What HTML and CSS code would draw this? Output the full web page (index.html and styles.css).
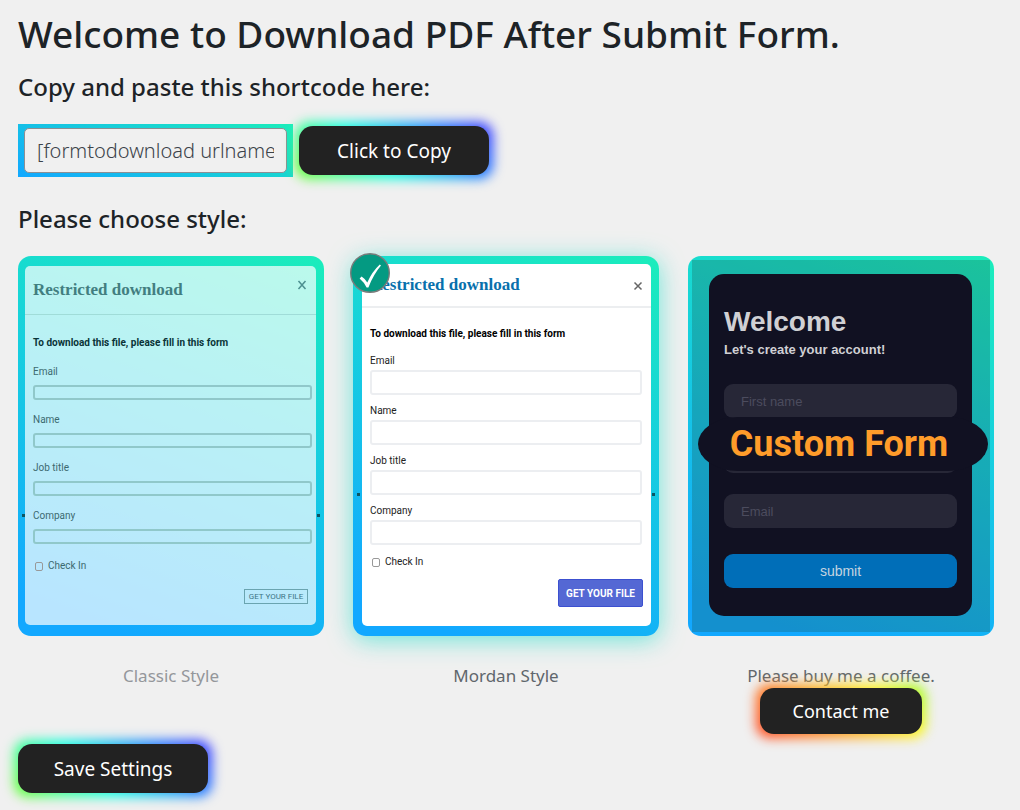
FILE: index.html
```html
<!DOCTYPE html>
<html lang="en">
<head>
  <meta charset="UTF-8">
  <meta name="viewport" content="width=device-width, initial-scale=1.0">
  <title>Download PDF After Submit Form</title>
  <link rel="stylesheet" href="styles.css">
</head>
<body>
  <main class="settings">
    <h1>Welcome to Download PDF After Submit Form.</h1>
    <h2><label for="shortcode">Copy and paste this shortcode here:</label></h2>
    <div class="copy-row">
      <div class="shortcode-box">
        <input type="text" id="shortcode" class="shortcode" readonly value="[formtodownload urlname=&quot;&quot;]">
      </div>
      <button type="button" class="glow-btn" onclick="copyShortcode()">Click to Copy</button>
    </div>

    <h2>Please choose style:</h2>
    <div class="styles">
      <div class="option">
        <input type="radio" name="style" id="style-classic" class="pick">
        <div class="frame classic">
          <div class="form">
            <div class="form-head">
              <h3>Restricted download</h3>
              <button type="button" class="close" aria-label="Close">
                <svg viewBox="0 0 10 10"><path d="M1.5 1 8.5 9M8.5 1 1.5 9"/></svg>
              </button>
            </div>
            <div class="form-body">
              <p>To download this file, please fill in this form</p>
              <label for="c-email">Email</label>
              <input type="text" id="c-email" class="field">
              <label for="c-name">Name</label>
              <input type="text" id="c-name" class="field">
              <label for="c-job">Job title</label>
              <input type="text" id="c-job" class="field">
              <label for="c-company">Company</label>
              <input type="text" id="c-company" class="field">
              <div class="check"><input type="checkbox" id="c-check"><label for="c-check">Check In</label></div>
              <button type="button" class="get-file">GET YOUR FILE</button>
            </div>
          </div>
        </div>
        <label for="style-classic" class="caption faded">Classic Style</label>
      </div>

      <div class="option">
        <input type="radio" name="style" id="style-mordan" class="pick" checked>
        <svg class="badge" viewBox="0 0 40 40"><circle cx="20" cy="20" r="19.3"/><path d="M9.6 25.4 11.6 23.4Q14.8 25.4 17.3 29.4 22 18.6 29.8 11.4L31 12.6Q23.6 21.4 18.4 34.4H16.6Q14 29 9.6 25.4z"/></svg>
        <div class="frame mordan">
          <div class="form">
            <div class="form-head">
              <h3>Restricted download</h3>
              <button type="button" class="close" aria-label="Close">
                <svg viewBox="0 0 10 10"><path d="M1.5 1.5 8.5 8.5M8.5 1.5 1.5 8.5"/></svg>
              </button>
            </div>
            <div class="form-body">
              <p>To download this file, please fill in this form</p>
              <label for="m-email">Email</label>
              <input type="text" id="m-email" class="field">
              <label for="m-name">Name</label>
              <input type="text" id="m-name" class="field">
              <label for="m-job">Job title</label>
              <input type="text" id="m-job" class="field">
              <label for="m-company">Company</label>
              <input type="text" id="m-company" class="field">
              <div class="check"><input type="checkbox" id="m-check"><label for="m-check">Check In</label></div>
              <button type="button" class="get-file">GET YOUR FILE</button>
            </div>
          </div>
        </div>
        <label for="style-mordan" class="caption">Mordan Style</label>
      </div>

      <div class="option">
        <div class="frame custom">
          <div class="account">
            <h3>Welcome</h3>
            <p>Let's create your account!</p>
            <input type="text" placeholder="First name" aria-label="First name">
            <input type="text" aria-label="Last name">
            <input type="text" placeholder="Email" aria-label="Email">
            <button type="button">submit</button>
          </div>
          <div class="ribbon">Custom Form</div>
        </div>
        <span class="caption">Please buy me a coffee.</span>
        <button type="button" class="glow-btn warm">Contact me</button>
      </div>
    </div>

    <button type="submit" class="glow-btn">Save Settings</button>
  </main>

  <script>
    function copyShortcode() {
      const input = document.getElementById('shortcode');
      input.select();
      navigator.clipboard.writeText(input.value);
    }
  </script>
</body>
</html>
```
FILE: styles.css
```css
* {
  box-sizing: border-box;
}
body {
  margin: 0;
  background-color: #f0f0f0;
  color: #1d2327;
  font-family: "Noto Sans", "Open Sans", sans-serif;
}
h1, h2, h3, p {
  margin: 0;
}
button, input {
  font-family: inherit;
}
.settings {
  padding: 11px 26px 18px 18px;
}
h1 {
  font-size: 37px;
  font-weight: 500;
  line-height: 46px;
  margin-bottom: 15px;
}
h2 {
  font-size: 24px;
  font-weight: 500;
  line-height: 30px;
  margin-bottom: 22px;
}

/* shortcode */
.copy-row {
  display: flex;
  align-items: center;
  gap: 6px;
  margin-bottom: 27px;
}
.shortcode-box {
  padding: 4px 6px;
  background: linear-gradient(20deg, #12a8ff, #1bedbb);
}
.shortcode {
  display: block;
  width: 263px;
  height: 45px;
  padding: 0 12px;
  border: 1px solid #8c8f94;
  border-radius: 5px;
  background-color: #f0f0f0;
  color: #3c434a;
  font-size: 20px;
  font-weight: 300;
}

/* buttons with a coloured glow behind */
.glow-btn {
  position: relative;
  z-index: 0;
  width: 190px;
  height: 49px;
  border: none;
  background: none;
  color: #fff;
  font-size: 19px;
  cursor: pointer;
}
.glow-btn::before,
.glow-btn::after {
  content: "";
  position: absolute;
  z-index: -1;
  border-radius: 14px;
}
.glow-btn::before {
  inset: -4px;
  background: linear-gradient(45deg, #70ff20, #40ff90 20%, #10ffe0 40%, #2080ff 75%, #4030ff);
  filter: blur(6px);
}
.glow-btn::after {
  inset: 0;
  background-color: #222;
}
.glow-btn.warm {
  width: 162px;
  height: 46px;
  font-size: 18px;
}
.glow-btn.warm::before {
  background: linear-gradient(45deg, #ff4020, #ff9020 35%, #fff420 75%, #90ff20);
}

/* style choices */
.styles {
  display: grid;
  grid-template-columns: repeat(3, 1fr);
  gap: 29px;
  margin-bottom: 10px;
}
.option {
  position: relative;
  display: flex;
  flex-direction: column;
  align-items: center;
}
.pick {
  position: absolute;
  top: 0;
  left: 0;
  margin: 0;
  opacity: 0;
}
.badge {
  position: absolute;
  z-index: 2;
  top: -3px;
  left: -3px;
  width: 40px;
  height: 40px;
  fill: #fff;
}
.badge circle {
  fill: #049a82;
  stroke: #7b7b7b;
  stroke-width: 1.4;
}
.caption {
  margin-top: 28px;
  color: #60666c;
  font-size: 17px;
  line-height: 24px;
}
.caption.faded {
  color: #94979b;
}
.frame {
  position: relative;
  display: grid;
  width: 100%;
  height: 380px;
  border-radius: 13px;
  background: linear-gradient(20deg, #12a8ff 8%, #16cfde 60%, #1bedbb);
}
.form {
  border-radius: 5px;
  background-color: #fff;
  color: #222;
}
.form-head {
  display: flex;
  justify-content: space-between;
}
.form-head h3 {
  font-family: "Liberation Serif", serif;
  font-size: 17px;
}
.close {
  width: 10px;
  height: 10px;
  padding: 0;
  border: none;
  background: none;
}
.close svg {
  display: block;
  fill: none;
  stroke: #666;
  stroke-width: 1.5;
}
.form-body {
  display: flex;
  flex-direction: column;
  padding: 0 8px;
  font-family: Roboto, sans-serif;
  font-size: 10px;
}
.form-body p {
  color: #000;
  font-weight: bold;
  line-height: 16px;
}
.form-body label {
  line-height: 16px;
}
.check {
  display: flex;
  align-items: center;
  gap: 5px;
  padding-left: 2px;
}
.check input {
  appearance: none;
  width: 8px;
  height: 9px;
  margin: 0;
  border: 1px solid #999;
  border-radius: 2px;
}
.get-file {
  align-self: flex-end;
  padding: 0;
  white-space: nowrap;
}

/* tick marks on the frame edge */
.classic::before, .classic::after,
.mordan::before, .mordan::after {
  content: "";
  position: absolute;
  top: 237px;
  width: 3px;
  height: 3px;
  background-color: #0c5563;
}
.classic::before, .mordan::before {
  left: 4px;
}
.classic::after, .mordan::after {
  right: 4px;
}

.classic {
  padding: 10px 8px 11px 7px;
}
.classic::before, .classic::after {
  top: 258px;
}
.classic .form {
  background-color: rgba(255, 255, 255, 0.7);
  color: #3c6a70;
}
.classic .form-head {
  height: 49px;
  padding: 14px 9px 0 8px;
  border-bottom: 1px solid #a0dcd8;
}
.classic h3 {
  color: #427e80;
}
.classic .form-body p {
  margin: 20px 0 13px;
  color: #0a3438;
}
.classic .field {
  height: 15px;
  margin: 5px -4px 12px 0;
  border: 2px solid #90c8ca;
  border-radius: 3px;
  background: none;
}
.classic .check {
  margin-top: 2px;
}
.classic .get-file {
  width: 64px;
  height: 15px;
  margin-top: 15px;
  border: 1px solid #6aa4b0;
  background: none;
  color: #3c7484;
  font-size: 8px;
}
.classic .close svg {
  stroke: #4c9090;
}

.mordan {
  padding: 8px 8px 10px 9px;
  box-shadow: 0 4px 24px rgba(27, 222, 200, 0.6);
}
.mordan .form-head {
  height: 44px;
  padding: 11px 8px 0;
  border-bottom: 2px solid #eceef0;
}
.mordan .close {
  margin-top: 6px;
}
.mordan h3 {
  color: #0870ac;
}
.mordan .form-body p {
  margin: 18px 0 11px;
}
.mordan .field {
  height: 25px;
  margin: 1px 1px 8px 0;
  border: 2px solid #eceef1;
  border-radius: 3px;
}
.mordan .check {
  margin-top: 1px;
}
.mordan .get-file {
  width: 85px;
  height: 28px;
  margin-top: 9px;
  border: 1px solid #3c50d0;
  border-radius: 2px;
  background-color: #5468d4;
  color: #fff;
  font-size: 10px;
  font-weight: bold;
}

.custom {
  padding: 18px 22px 20px 21px;
}
.custom::before {
  content: "";
  position: absolute;
  inset: 4px;
  background-color: rgba(28, 70, 60, 0.25);
}
.account {
  position: relative;
  display: flex;
  flex-direction: column;
  padding: 32px 15px 0;
  border-radius: 15px;
  background-color: #111122;
  color: #d0d0d4;
  font-family: "Liberation Sans", sans-serif;
}
.account h3 {
  font-size: 28px;
  line-height: 32px;
}
.account p {
  margin: 4px 0 26px;
  font-size: 13px;
  font-weight: bold;
  line-height: 16px;
}
.account input {
  height: 34px;
  margin-bottom: 21px;
  padding: 0 17px;
  border: none;
  border-radius: 9px;
  background-color: #272737;
  font-size: 13px;
}
.account input::placeholder {
  color: #4c4c5e;
}
.account button {
  height: 34px;
  margin-top: 5px;
  border: none;
  border-radius: 9px;
  background-color: #006eb8;
  color: #c4d4e0;
  font-size: 14px;
}
.ribbon {
  position: absolute;
  top: 161px;
  left: 10px;
  right: 6px;
  padding-right: 8px;
  border-radius: 40px / 27px;
  background-color: #111122;
  color: #ff9c2a;
  font-family: Roboto, sans-serif;
  font-size: 36px;
  font-weight: bold;
  line-height: 54px;
  text-align: center;
}
```
